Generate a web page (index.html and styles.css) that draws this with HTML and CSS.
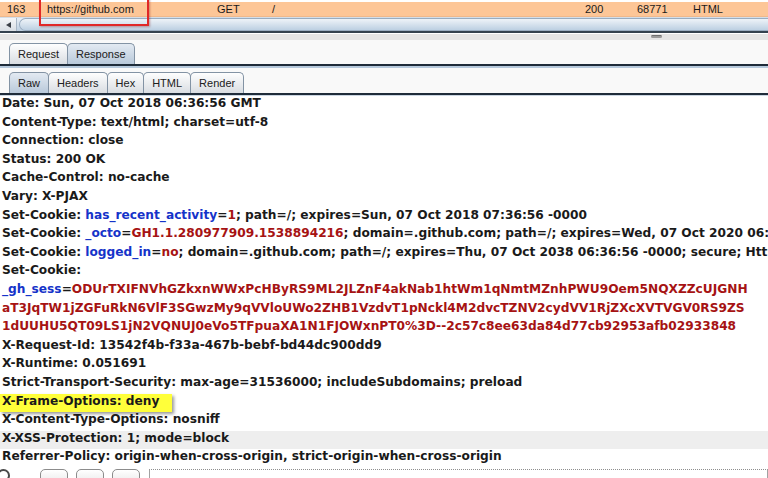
FILE: index.html
```html
<!DOCTYPE html>
<html lang="en">
  <head>
    <meta charset="UTF-8" />
    <meta name="viewport" content="width=device-width, initial-scale=1.0" />
    <title>Response - github.com</title>
    <link rel="stylesheet" href="styles.css">
  </head>
  <body>
    <div class="history">
      <div class="prev-row"></div>
      <div class="req-row">
        <span class="col col-num">163</span>
        <span class="col col-host">https://github.com</span>
        <span class="col col-method">GET</span>
        <span class="col col-path">/</span>
        <span class="col col-status">200</span>
        <span class="col col-len">68771</span>
        <span class="col col-mime">HTML</span>
      </div>
      <div class="hscroll">
        <div class="hscroll-btn"><span class="arrow-left"></span></div>
        <div class="hscroll-thumb"></div>
      </div>
      <div class="mark-box"></div>
    </div>

    <div class="splitter"><span class="grip"></span></div>

    <div class="tabs tabs-main">
      <div class="tab">Request</div>
      <div class="tab active">Response</div>
    </div>
    <div class="tabs tabs-sub">
      <div class="tab active">Raw</div>
      <div class="tab">Headers</div>
      <div class="tab">Hex</div>
      <div class="tab">HTML</div>
      <div class="tab">Render</div>
    </div>

    <div class="message">
      <div class="line">Date: Sun, 07 Oct 2018 06:36:56 GMT</div>
      <div class="line">Content-Type: text/html; charset=utf-8</div>
      <div class="line">Connection: close</div>
      <div class="line">Status: 200 OK</div>
      <div class="line">Cache-Control: no-cache</div>
      <div class="line">Vary: X-PJAX</div>
      <div class="line">Set-Cookie: <span class="ck">has_recent_activity</span>=<span class="cv">1</span>; path=/; expires=Sun, 07 Oct 2018 07:36:56 -0000</div>
      <div class="line">Set-Cookie: <span class="ck">_octo</span>=<span class="cv">GH1.1.280977909.1538894216</span>; domain=.github.com; path=/; expires=Wed, 07 Oct 2020 06:36:56 -0000</div>
      <div class="line">Set-Cookie: <span class="ck">logged_in</span>=<span class="cv">no</span>; domain=.github.com; path=/; expires=Thu, 07 Oct 2038 06:36:56 -0000; secure; HttpOnly</div>
      <div class="line">Set-Cookie:</div>
      <div class="line"><span class="ck">_gh_sess</span>=<span class="cv">ODUrTXIFNVhGZkxnWWxPcHByRS9ML2JLZnF4akNab1htWm1qNmtMZnhPWU9Oem5NQXZZcUJGNH</span></div>
      <div class="line"><span class="cv">aT3JqTW1jZGFuRkN6VlF3SGwzMy9qVVloUWo2ZHB1VzdvT1pNckl4M2dvcTZNV2cydVV1RjZXcXVTVGV0RS9ZS</span></div>
      <div class="line"><span class="cv">1dUUHU5QT09LS1jN2VQNUJ0eVo5TFpuaXA1N1FJOWxnPT0%3D--2c57c8ee63da84d77cb92953afb02933848</span></div>
      <div class="line">X-Request-Id: 13542f4b-f33a-467b-bebf-bd44dc900dd9</div>
      <div class="line">X-Runtime: 0.051691</div>
      <div class="line">Strict-Transport-Security: max-age=31536000; includeSubdomains; preload</div>
      <div class="line line-mark">X-Frame-Options: deny</div>
      <div class="line">X-Content-Type-Options: nosniff</div>
      <div class="line line-grey">X-XSS-Protection: 1; mode=block</div>
      <div class="line">Referrer-Policy: origin-when-cross-origin, strict-origin-when-cross-origin</div>
    </div>

    <div class="footer">
      <span class="help"></span>
      <span class="fbtn"></span>
      <span class="fbtn"></span>
      <span class="fbtn"></span>
      <span class="search"></span>
    </div>
  </body>
</html>
```

FILE: styles.css
```css
:root {
  --text: #1a1a1a;
  --row-hl: #fdc697;
  --line-dark: #1f2c3a;
  --tab-border: #8393a4;
  --cookie-key: #1533c9;
  --cookie-val: #a61313;
}
* {
  box-sizing: border-box;
  margin: 0;
  padding: 0;
}
html,
body {
  width: 768px;
  height: 478px;
  overflow: hidden;
}
body {
  background: #fbfbfb;
  color: var(--text);
  font-family: "Liberation Sans", Arial, sans-serif;
  font-size: 11px;
}

/* proxy history table (top) */
.history {
  position: relative;
}
.prev-row {
  height: 2px;
  background: #ffffff;
}
.req-row {
  display: flex;
  height: 15px;
  line-height: 15px;
  background: var(--row-hl);
  border-bottom: 1px solid #efb88c;
}
.col {
  padding-left: 7px;
  white-space: nowrap;
}
.col-num {
  width: 40px;
  border-right: 1px solid #f2d5bd;
}
.col-host {
  width: 170px;
}
.col-method {
  width: 55px;
}
.col-path {
  width: 313px;
}
.col-status {
  width: 52px;
}
.col-len {
  width: 56px;
}
.col-mime {
  flex: 1;
}
.hscroll {
  display: flex;
  height: 14px;
  background: linear-gradient(#e9eff5, #bccee0);
  border-top: 1px solid #d4dee8;
}
.hscroll-btn {
  width: 17px;
  display: flex;
  align-items: center;
  justify-content: center;
  background: linear-gradient(#f4f6f8, #d9dee4);
  border-right: 1px solid #a9b7c6;
}
.arrow-left {
  width: 0;
  height: 0;
  border-top: 3px solid transparent;
  border-bottom: 3px solid transparent;
  border-right: 5px solid #3a3f46;
}
.hscroll-thumb {
  flex: 1;
  margin-left: 2px;
  border: 1px solid #9aadc1;
  border-right: none;
  border-radius: 8px 0 0 8px;
  background: linear-gradient(#eef3f8, #bdd0e2);
}
.mark-box {
  position: absolute;
  left: 39px;
  top: -6px;
  width: 110px;
  height: 32px;
  border: 2px solid #e02828;
  box-shadow: 1px 1px 2px rgba(120, 0, 0, 0.35);
}

/* split pane divider */
.splitter {
  display: flex;
  justify-content: flex-end;
  height: 9px;
  padding-right: 106px;
  background: #e4e4e4;
  border-top: 2px solid #34424f;
  box-shadow: inset 0 1px 0 #ffffff;
}
.grip {
  width: 11px;
  height: 3px;
  margin-top: 2px;
  border-radius: 2px;
  background: #9a9a9a;
  border-top: 1px solid #6e6e6e;
}

/* tab strips */
.tabs {
  display: flex;
  padding-left: 9px;
  background: #f9f9f9;
}
.tabs-main {
  padding-top: 3px;
  border-bottom: 2px solid var(--line-dark);
}
.tabs-sub {
  padding-top: 4px;
  border-top: 2px solid #b6c9dc;
  border-bottom: 2px solid var(--line-dark);
}
.tab {
  height: 21px;
  line-height: 21px;
  padding: 0 8px;
  margin-right: -1px;
  border: 1px solid var(--tab-border);
  border-bottom: none;
  border-radius: 5px 5px 0 0;
  background: linear-gradient(#fefefe, #d9dde2);
  color: #202020;
  font-size: 11px;
}
.tab.active {
  background: linear-gradient(#e3eaf2, #b9c9da);
}

/* raw response */
.message {
  border-top: 1px solid #cbd6e2;
  background: #ffffff;
  font-family: "DejaVu Sans", Verdana, sans-serif;
  font-weight: bold;
  font-size: 12.2px;
}
.line {
  height: 18.6px;
  line-height: 14.6px;
  padding-left: 2px;
  white-space: nowrap;
  overflow: hidden;
}
.ck {
  color: var(--cookie-key);
}
.cv {
  color: var(--cookie-val);
}
.line-mark {
  width: 172px;
  background: #ffff3a;
  box-shadow: 2px 2px 3px rgba(0, 0, 0, 0.4);
  overflow: visible;
}
.line-grey {
  background: #eeeeee;
}

/* bottom search bar */
.footer {
  display: flex;
  align-items: flex-start;
  height: 30px;
  padding-top: 1px;
  background: #ffffff;
}
.help {
  width: 13px;
  height: 13px;
  margin-left: -3px;
  margin-right: 30px;
  border: 2px solid #4a4a4a;
  border-radius: 50%;
}
.fbtn {
  width: 28px;
  height: 20px;
  margin-right: 8px;
  border: 1px solid #8c8c8c;
  border-radius: 5px;
  background: linear-gradient(#ffffff, #e2e2e2);
}
.search {
  flex: 1;
  height: 20px;
  margin-left: 1px;
  border: 1px solid #a2a2a2;
  border-top: 1px dotted #8e8e8e;
  background: #ffffff;
}
```
